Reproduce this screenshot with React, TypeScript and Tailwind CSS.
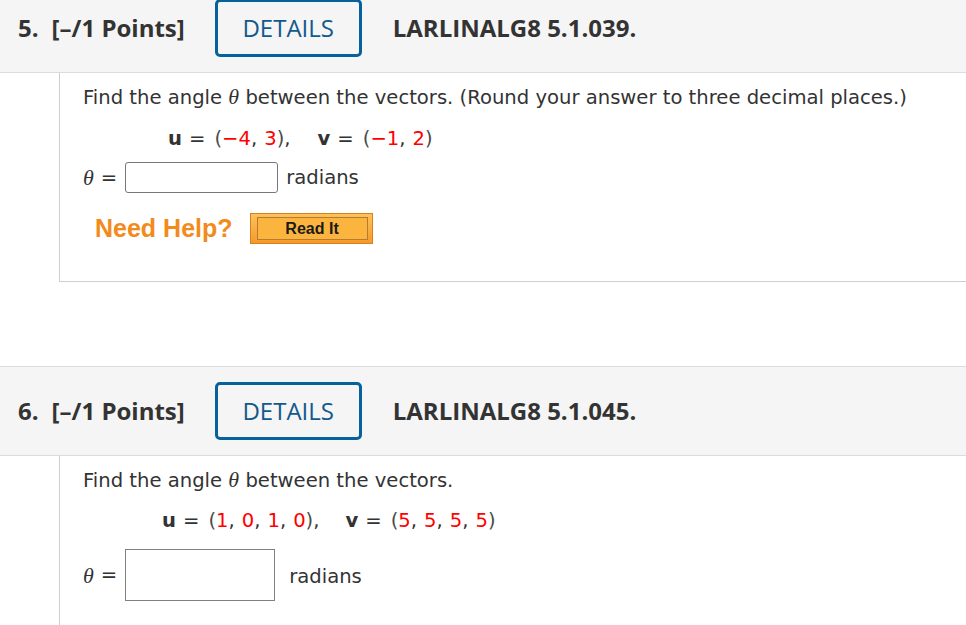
import React from 'react';

const Theta = () => (
  <span className="font-['Liberation_Serif',serif] italic text-[22px] text-[#333]">θ</span>
);

const Vec = ({ name, items }: { name: string; items: string[] }) => (
  <span className="inline-flex items-baseline">
    <b>{name}</b>
    <span className="ml-[7px]">=</span>
    <span className="ml-[9px] text-[#4a4a4a]">(</span>
    {items.map((it, i) => (
      <React.Fragment key={i}>
        {i > 0 && <span className="mr-[7px]">,</span>}
        <span className="text-[#ff0000]">{it}</span>
      </React.Fragment>
    ))}
    <span className="text-[#4a4a4a]">)</span>
  </span>
);

const Header = ({ num, code }: { num: string; code: string }) => (
  <div className="h-[90px] border-y border-[#dcdcdc] bg-[#f5f5f5] flex items-center pl-[18px] font-['Open_Sans',sans-serif] text-[#333] text-[24px]">
    <span className="font-bold">{num}.</span>
    <span className="font-bold ml-[13px]">[–/1 Points]</span>
    <div className="ml-[30px] w-[147px] h-[58px] border-[3px] border-[#07629b] rounded-[5px] flex items-center justify-center text-[#12598d]">
      DETAILS
    </div>
    <span className="font-bold ml-[31px]">{code}</span>
  </div>
);

export default function App() {
  return (
    <div className="w-[966px] h-[625px] overflow-hidden bg-white font-['DejaVu_Sans',sans-serif] text-[19.6px] text-[#333]">
      <div className="-mt-[17px]">
        <Header num="5" code="LARLINALG8 5.1.039." />
        <div className="ml-[59px] border-l border-b border-[#cfcfcf] h-[209px] pl-[23px] pt-[12px]">
          <div className="leading-[24px]">
            Find the angle <Theta /> between the vectors. (Round your answer to three decimal places.)
          </div>
          <div className="leading-[24px] mt-[17px] ml-[85px] flex items-baseline">
            <Vec name="u" items={['−4', '3']} />
            <span className="mr-[27px]">,</span>
            <Vec name="v" items={['−1', '2']} />
          </div>
          <div className="flex items-center mt-[11px] h-[31px]">
            <Theta />
            <span className="ml-[7px]">=</span>
            <div className="ml-[8px] w-[153px] h-[31px] border border-[#777] rounded-[3px] bg-white" />
            <span className="ml-[8px]">radians</span>
          </div>
          <div className="flex items-center mt-[17px] ml-[12px]">
            <span className="font-['Liberation_Sans',sans-serif] font-bold text-[25px] text-[#f28a1c]">Need Help?</span>
            <div className="ml-[17px] w-[123px] h-[31px] border border-[#d9801c] bg-gradient-to-b from-[#fcc25a] to-[#f59a2a] p-[3px] pl-[6px] pr-[4px]">
              <div className="h-full border border-[#b87a30] bg-[#fbb53e] flex items-center justify-center font-['Liberation_Sans',sans-serif] font-bold text-[16px] text-[#1a1a1a]">
                Read It
              </div>
            </div>
          </div>
        </div>
        <div className="h-[84px]" />
        <Header num="6" code="LARLINALG8 5.1.045." />
        <div className="ml-[59px] border-l border-[#cfcfcf] h-[300px] pl-[23px] pt-[12px]">
          <div className="leading-[24px]">
            Find the angle <Theta /> between the vectors.
          </div>
          <div className="leading-[24px] mt-[16px] ml-[79px] flex items-baseline">
            <Vec name="u" items={['1', '0', '1', '0']} />
            <span className="mr-[26px]">,</span>
            <Vec name="v" items={['5', '5', '5', '5']} />
          </div>
          <div className="flex items-center mt-[16px] h-[52px]">
            <Theta />
            <span className="ml-[7px]">=</span>
            <div className="ml-[8px] w-[150px] h-[52px] border border-[#808080] bg-white" />
            <span className="ml-[14px] mt-[3px]">radians</span>
          </div>
        </div>
      </div>
    </div>
  );
}
